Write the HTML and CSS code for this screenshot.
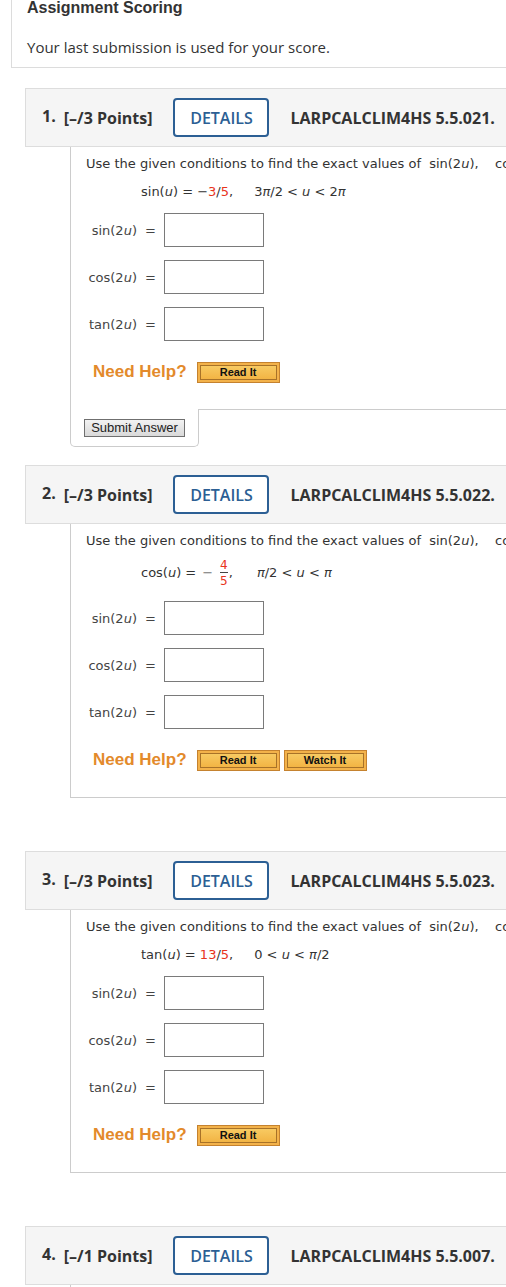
FILE: index.html
```html
<!DOCTYPE html>
<html lang="en">
<head>
<meta charset="utf-8">
<title>Assignment</title>
<link rel="stylesheet" href="styles.css">
</head>
<body>
<div class="page">
  <section class="scoring">
    <h2 class="scoring-title">Assignment Scoring</h2>
    <p class="scoring-text">Your last submission is used for your score.</p>
  </section>

  <div class="questions">
    <div class="question with-submit">
      <div class="qhead">
        <span class="qnum">1.</span>
        <span class="qpts">[–/3 Points]</span>
        <button class="details">DETAILS</button>
        <span class="qref">LARPCALCLIM4HS 5.5.021.</span>
      </div>
      <div class="qbody">
        <p class="prompt">Use the given conditions to find the exact values of <span class="fn">sin(2<i>u</i>),</span> &nbsp; <span class="fn">cos(2<i>u</i>),</span> and <span class="fn">tan(2<i>u</i>)</span> using the double-angle formulas.</p>
        <p class="math">sin(<i>u</i>) = −<span class="red">3</span>/<span class="red">5</span>,<span class="range">3<i>π</i>/2 &lt; <i>u</i> &lt; 2<i>π</i></span></p>
        <div class="answers">
          <div class="arow"><span class="alabel">sin(2<i>u</i>) <span class="eq">=</span></span><span class="abox"></span></div>
          <div class="arow"><span class="alabel">cos(2<i>u</i>) <span class="eq">=</span></span><span class="abox"></span></div>
          <div class="arow"><span class="alabel">tan(2<i>u</i>) <span class="eq">=</span></span><span class="abox"></span></div>
        </div>
        <div class="help">
          <span class="needhelp">Need Help?</span>
          <button class="rbtn"><span class="rbtn-in">Read It</span></button>
        </div>
      </div>
      <div class="submit-tab"><button class="submit">Submit Answer</button></div>
    </div>

    <div class="question">
      <div class="qhead">
        <span class="qnum">2.</span>
        <span class="qpts">[–/3 Points]</span>
        <button class="details">DETAILS</button>
        <span class="qref">LARPCALCLIM4HS 5.5.022.</span>
      </div>
      <div class="qbody">
        <p class="prompt">Use the given conditions to find the exact values of <span class="fn">sin(2<i>u</i>),</span> &nbsp; <span class="fn">cos(2<i>u</i>),</span> and <span class="fn">tan(2<i>u</i>)</span> using the double-angle formulas.</p>
        <div class="math math-frac">
          <span>cos(<i>u</i>)</span><span class="eqsign">=</span><span class="minus">−</span>
          <span class="frac"><span class="red">4</span><span class="red den">5</span></span><span>,</span>
          <span class="range wide"><i>π</i>/2 &lt; <i>u</i> &lt; <i>π</i></span>
        </div>
        <div class="answers after-frac">
          <div class="arow"><span class="alabel">sin(2<i>u</i>) <span class="eq">=</span></span><span class="abox"></span></div>
          <div class="arow"><span class="alabel">cos(2<i>u</i>) <span class="eq">=</span></span><span class="abox"></span></div>
          <div class="arow"><span class="alabel">tan(2<i>u</i>) <span class="eq">=</span></span><span class="abox"></span></div>
        </div>
        <div class="help">
          <span class="needhelp">Need Help?</span>
          <button class="rbtn"><span class="rbtn-in">Read It</span></button>
          <button class="rbtn"><span class="rbtn-in">Watch It</span></button>
        </div>
      </div>
    </div>

    <div class="question">
      <div class="qhead">
        <span class="qnum">3.</span>
        <span class="qpts">[–/3 Points]</span>
        <button class="details">DETAILS</button>
        <span class="qref">LARPCALCLIM4HS 5.5.023.</span>
      </div>
      <div class="qbody">
        <p class="prompt">Use the given conditions to find the exact values of <span class="fn">sin(2<i>u</i>),</span> &nbsp; <span class="fn">cos(2<i>u</i>),</span> and <span class="fn">tan(2<i>u</i>)</span> using the double-angle formulas.</p>
        <p class="math">tan(<i>u</i>) = <span class="red">13</span>/<span class="red">5</span>,<span class="range">0 &lt; <i>u</i> &lt; <i>π</i>/2</span></p>
        <div class="answers">
          <div class="arow"><span class="alabel">sin(2<i>u</i>) <span class="eq">=</span></span><span class="abox"></span></div>
          <div class="arow"><span class="alabel">cos(2<i>u</i>) <span class="eq">=</span></span><span class="abox"></span></div>
          <div class="arow"><span class="alabel">tan(2<i>u</i>) <span class="eq">=</span></span><span class="abox"></span></div>
        </div>
        <div class="help">
          <span class="needhelp">Need Help?</span>
          <button class="rbtn"><span class="rbtn-in">Read It</span></button>
        </div>
      </div>
    </div>

    <div class="question">
      <div class="qhead">
        <span class="qnum">4.</span>
        <span class="qpts">[–/1 Points]</span>
        <button class="details">DETAILS</button>
        <span class="qref">LARPCALCLIM4HS 5.5.007.</span>
      </div>
      <div class="qbody">
        <p class="prompt">Find the exact value of the expression.</p>
      </div>
    </div>
  </div>
</div>
</body>
</html>
```

FILE: styles.css
```css
html, body {
  margin: 0;
  padding: 0;
  overflow: hidden;
  background: #fff;
}

.page {
  width: 1000px;
  font-family: "Open Sans", "Liberation Sans", sans-serif;
  color: #333;
}

/* Top scoring box */
.scoring {
  margin-left: 11px;
  border: 1px solid #dcdcdc;
  border-top: none;
  padding: 0 15px 10px 15px;
}
.scoring-title {
  margin: 0;
  font-family: "Liberation Sans", Arial, sans-serif;
  font-weight: bold;
  font-size: 16px;
  line-height: 16px;
  color: #333;
}
.scoring-text {
  margin: 21px 0 0 0;
  font-size: 15px;
  line-height: 20px;
  color: #333;
}

/* Questions */
.questions {
  margin: 20px 0 0 25px;
}
.question {
  margin-bottom: 53px;
}
.question.with-submit {
  margin-bottom: 18px;
}

.qhead {
  box-sizing: border-box;
  height: 59px;
  display: flex;
  align-items: center;
  background: #f5f5f5;
  border: 1px solid #dddddd;
  border-right: none;
  padding-left: 16px;
  font-size: 16px;
  font-weight: 700;
  color: #333;
}
.qnum {
  margin-right: 8px;
  position: relative;
  top: -2px;
}
.qpts {
  margin-right: 21px;
}
.details {
  box-sizing: border-box;
  width: 96px;
  height: 39px;
  border: 2px solid #2c5f94;
  border-radius: 4px;
  background: #fff;
  color: #2c5f94;
  font-family: "Open Sans", "Liberation Sans", sans-serif;
  font-size: 16px;
  font-weight: 600;
  padding: 0;
  margin-right: 21px;
}
.qref {
  white-space: nowrap;
}

.qbody {
  margin-left: 45px;
  border-left: 1px solid #cccccc;
  border-bottom: 1px solid #cccccc;
  padding: 7px 0 27px 15px;
  font-family: "DejaVu Sans", Verdana, sans-serif;
  font-size: 13px;
  color: #333;
}
.prompt {
  margin: 0;
  line-height: 20px;
  white-space: nowrap;
}
.fn {
  margin-left: 4px;
}
.math {
  margin: 8px 0 0 55px;
  line-height: 20px;
  white-space: nowrap;
}
.red {
  color: #e8341c;
}
.range {
  margin-left: 21px;
}
.range.wide {
  margin-left: 24px;
}

.math-frac {
  display: flex;
  align-items: center;
  height: 32px;
  margin-top: 6px;
}
.eqsign {
  margin-left: 4px;
}
.minus {
  color: #777;
  margin-left: 6px;
  margin-right: 6px;
}
.frac {
  display: inline-flex;
  flex-direction: column;
  align-items: center;
  font-size: 12px;
  line-height: 14px;
  padding: 0 1px;
}
.frac .den {
  border-top: 1px solid #444;
  padding-top: 1px;
  align-self: stretch;
  text-align: center;
}

.answers {
  margin-top: 11px;
  display: flex;
  flex-direction: column;
  gap: 13px;
}
.answers.after-frac {
  margin-top: 12px;
}
.arow {
  display: flex;
  align-items: center;
}
.alabel {
  width: 70px;
  text-align: right;
  white-space: nowrap;
  color: #444;
}
.eq {
  margin-left: 4px;
}
.abox {
  box-sizing: border-box;
  width: 100px;
  height: 34px;
  margin-left: 8px;
  border: 1px solid #7a7a7a;
  background: #fff;
}

.help {
  margin: 21px 0 0 7px;
  display: flex;
  align-items: center;
  height: 20px;
}
.needhelp {
  font-family: "Liberation Sans", Arial, sans-serif;
  font-weight: bold;
  font-size: 17px;
  color: #e38a2b;
  margin-right: 10px;
}
.rbtn {
  box-sizing: border-box;
  width: 83px;
  height: 21px;
  padding: 2px;
  margin-right: 4px;
  border: 1px solid #c5822f;
  background: #f3b24a;
  display: flex;
}
.rbtn-in {
  flex: 1;
  display: flex;
  align-items: center;
  justify-content: center;
  border: 1px solid #a87228;
  background: linear-gradient(#f8ca62, #f2b444);
  font-family: "Liberation Sans", Arial, sans-serif;
  font-weight: bold;
  font-size: 11px;
  color: #111;
}

.submit-tab {
  box-sizing: border-box;
  width: 129px;
  margin: -1px 0 0 45px;
  background: #fff;
  border: 1px solid #cccccc;
  border-top: none;
  border-radius: 0 0 5px 5px;
  padding: 10px 0 9px 13px;
}
.submit {
  box-sizing: border-box;
  width: 101px;
  height: 18px;
  padding: 0;
  border: 1px solid #6f6f6f;
  border-radius: 0;
  background: linear-gradient(#f2f2f2, #d9d9d9);
  font-family: "Liberation Sans", Arial, sans-serif;
  font-size: 13px;
  line-height: 16px;
  color: #222;
  display: block;
}
```
